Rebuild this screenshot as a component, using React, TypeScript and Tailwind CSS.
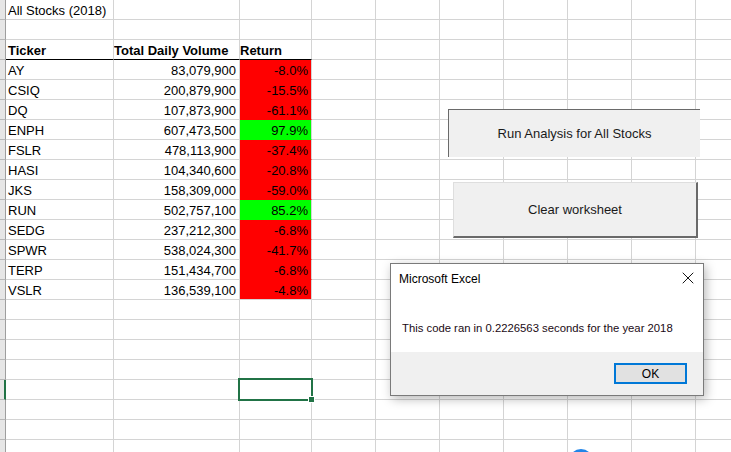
import { X } from 'lucide-react'

interface Fila {
  ticker: string
  volume: string
  retorno: string
}

const dados: Fila[] = [
  { ticker: 'AY', volume: '83,079,900', retorno: '-8.0%' },
  { ticker: 'CSIQ', volume: '200,879,900', retorno: '-15.5%' },
  { ticker: 'DQ', volume: '107,873,900', retorno: '-61.1%' },
  { ticker: 'ENPH', volume: '607,473,500', retorno: '97.9%' },
  { ticker: 'FSLR', volume: '478,113,900', retorno: '-37.4%' },
  { ticker: 'HASI', volume: '104,340,600', retorno: '-20.8%' },
  { ticker: 'JKS', volume: '158,309,000', retorno: '-59.0%' },
  { ticker: 'RUN', volume: '502,757,100', retorno: '85.2%' },
  { ticker: 'SEDG', volume: '237,212,300', retorno: '-6.8%' },
  { ticker: 'SPWR', volume: '538,024,300', retorno: '-41.7%' },
  { ticker: 'TERP', volume: '151,434,700', retorno: '-6.8%' },
  { ticker: 'VSLR', volume: '136,539,100', retorno: '-4.8%' },
]

const TOTAL_LINHAS = 23
const LINHA_SELECIONADA = 19 // index 0-based (row 20)
const vazias = Array.from({ length: 7 })

const cell = 'border-r border-b border-[#d4d4d4] overflow-hidden whitespace-nowrap pt-[3px] leading-[16px]'

function Linha({ i }: { i: number }) {
  const strip = (
    <div
      className={`bg-[#e6e6e6] border-b border-b-[#b8b8b8] ${
        i === LINHA_SELECIONADA ? 'border-r-2 border-r-[#217346]' : 'border-r border-r-[#9e9e9e]'
      }`}
    />
  )

  let a: React.ReactNode = null
  let b: React.ReactNode = null
  let c: React.ReactNode = null
  let aCls = cell
  let bCls = cell
  let cCls = cell

  if (i === 0) {
    a = 'All Stocks (2018)'
  } else if (i === 2) {
    a = 'Ticker'
    b = 'Total Daily Volume'
    c = 'Return'
    aCls += ' font-bold border-b-black'
    bCls += ' font-bold border-b-black'
    cCls += ' font-bold border-b-black'
  } else if (i >= 3 && i < 3 + dados.length) {
    const d = dados[i - 3]
    const positivo = !d.retorno.startsWith('-')
    const ultima = i === 2 + dados.length
    a = d.ticker
    b = d.volume
    c = d.retorno
    bCls += ' text-right pr-[3px]'
    cCls += ` text-right pr-[3px] ${positivo ? 'bg-[#00ff00]' : 'bg-[#ff0000]'} ${
      ultima ? '' : positivo ? 'border-b-[#00ff00]' : 'border-b-[#ff0000]'
    }`
  }

  return (
    <>
      {strip}
      <div className={`${aCls} pl-[2px]`}>{a}</div>
      <div className={bCls}>{b}</div>
      <div className={cCls}>{c}</div>
      {vazias.map((_, k) => (
        <div key={k} className={cell} />
      ))}
    </>
  )
}

export default function App() {
  return (
    <div className="relative w-[731px] h-[452px] overflow-hidden bg-white text-black font-['Liberation_Sans',Arial,sans-serif] text-[13px]">
      <div className="grid grid-cols-[6px_108px_126px_72px_repeat(7,64px)] auto-rows-[20px]">
        {Array.from({ length: TOTAL_LINHAS }).map((_, i) => (
          <Linha key={i} i={i} />
        ))}
      </div>

      {/* selected cell */}
      <div className="absolute left-[238px] top-[378px] w-[75px] h-[23px] border-2 border-[#217346]" />
      <div className="absolute left-[308px] top-[396px] w-[7px] h-[7px] bg-[#217346] border border-white" />

      {/* macro buttons */}
      <button className="absolute left-[448px] top-[109px] w-[252px] h-[48px] bg-[#f0f0f0] border-t border-l border-[#6a6a6a] text-[13px] text-[#1a1a1a] flex items-center justify-center">
        Run Analysis for All Stocks
      </button>
      <button className="absolute left-[453px] top-[182px] w-[245px] h-[56px] bg-[#f0f0f0] border-t border-l border-t-[#dedede] border-l-[#dedede] border-r-2 border-b-2 border-r-[#6a6a6a] border-b-[#6a6a6a] text-[13px] text-[#1a1a1a] flex items-center justify-center">
        Clear worksheet
      </button>

      {/* msgbox */}
      <div className="absolute left-[390px] top-[263px] w-[314px] h-[133px] border border-[#7a7a7a] bg-white flex flex-col shadow-[2px_3px_10px_rgba(0,0,0,0.28)]">
        <div className="h-[88px] flex flex-col">
          <div className="flex items-start justify-between pl-[8px] pr-[5px] pt-[4px]">
            <span className="mt-[4px] text-[12px] leading-[14px]">Microsoft Excel</span>
            <X size={20} strokeWidth={1.1} className="text-black" />
          </div>
          <div className="pl-[11px] pt-[34px] text-[11.3px] leading-[13px] text-[#1a0a14]">
            This code ran in 0.2226563 seconds for the year 2018
          </div>
        </div>
        <div className="flex-1 bg-[#f0f0f0] flex justify-end items-start pt-[11px] pr-[16px]">
          <button className="w-[73px] h-[21px] bg-[#e1e1e1] border-2 border-[#0078d7] text-[12px] leading-[14px] flex items-center justify-center">
            OK
          </button>
        </div>
      </div>

      {/* floating circle at bottom */}
      <div className="absolute left-[569px] top-[449px] w-[24px] h-[24px] rounded-full bg-[#2185e8]" />
    </div>
  )
}
